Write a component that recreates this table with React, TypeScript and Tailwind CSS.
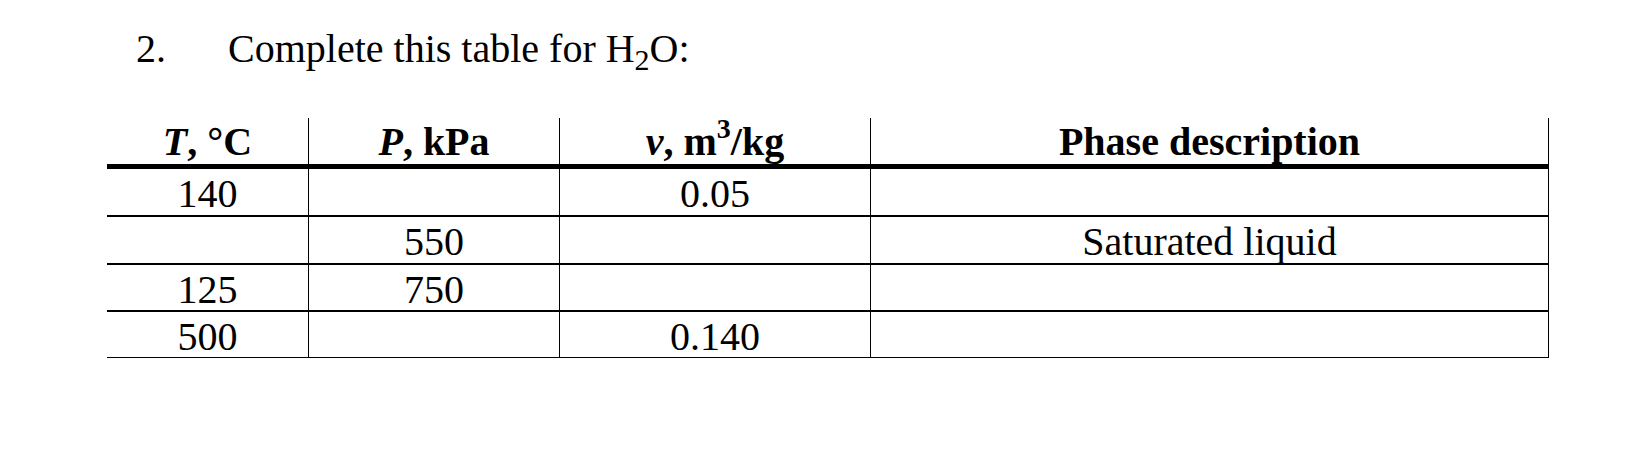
import React from "react";

const cols = "grid grid-cols-[202px_251px_311px_678px]";
const cell = "border-r border-black text-center leading-[46px] whitespace-nowrap";

export default function App() {
  const rows: { h: string; b: string; v: string[] }[] = [
    { h: "h-[46px]", b: "border-b-2", v: ["140", "", "0.05", ""] },
    { h: "h-[46px]", b: "border-b-2", v: ["", "550", "", "Saturated liquid"] },
    { h: "h-[45px]", b: "border-b-2", v: ["125", "750", "", ""] },
    { h: "h-[45px]", b: "border-b", v: ["500", "", "0.140", ""] },
  ];
  return (
    <div
      className="w-[1625px] h-[452px] bg-white text-black overflow-hidden"
      style={{ fontFamily: '"Liberation Serif", "Times New Roman", serif' }}
    >
      <div className="pt-[26px] pl-[136px] flex text-[40px] leading-[46px]">
        <span className="w-[92px]">2.</span>
        <span>
          Complete this table for H<sub>2</sub>O:
        </span>
      </div>
      <div className="mt-[46px] ml-[107px] w-[1442px] text-[40px]">
        <div className={`${cols} border-b-[5px] border-black font-bold`}>
          <div className={`${cell} h-[46px] pt-[1px]`}>
            <i>T</i>, °C
          </div>
          <div className={`${cell} h-[46px] pt-[1px]`}>
            <i>P</i>, kPa
          </div>
          <div className={`${cell} h-[46px] pt-[1px]`}>
            <i>v</i>, m<sup className="relative -top-[17px] text-[28px]">3</sup>/kg
          </div>
          <div className={`${cell} h-[46px] pt-[1px]`}>Phase description</div>
        </div>
        {rows.map((r, i) => (
          <div key={i} className={`${cols} ${r.b} border-black`}>
            {r.v.map((t, j) => (
              <div key={j} className={`${cell} ${r.h} pt-[2px]`}>
                {t}
              </div>
            ))}
          </div>
        ))}
      </div>
    </div>
  );
}
